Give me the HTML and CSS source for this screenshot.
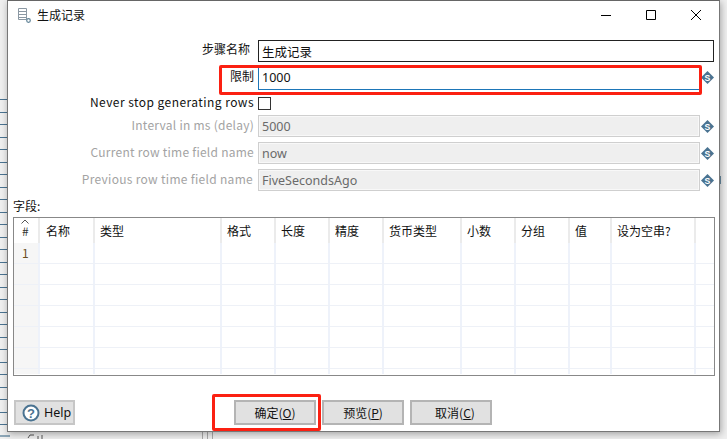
FILE: index.html
```html
<!DOCTYPE html>
<html lang="zh">
<head>
<meta charset="utf-8">
<title>生成记录</title>
<link rel="stylesheet" href="styles.css">
</head>
<body>
<div class="desktop">
  <div class="backdrop-lines"></div>
  <svg class="backdrop-bits" width="727" height="439" viewBox="0 0 727 439"><path d="M202.500 432v7M207.500 432v7M212.500 432v7" stroke="#a9a9a9"/><path d="M0 436h10" stroke="#6d8ea5" stroke-width="1.500"/><path d="M28 438l2-3h4M38 436v3M42 435v4" stroke="#555" fill="none"/><path d="M720.500 176v8" stroke="#6d8ea5"/></svg>
  <div class="window">
    <div class="titlebar">
      <svg class="app-icon" width="14" height="16" viewBox="0 0 14 16"><path d="M.5.5h8v11h-8zM.5 3.500h8M.5 6.500h8M.5 9.500h8" fill="none" stroke="#8b98a3"/><circle cx="10.500" cy="12.500" r="1.800" fill="none" stroke="#5f8296" stroke-width="1.200"/></svg>
      <span class="title">生成记录</span>
      <div class="controls">
        <svg width="12" height="12" viewBox="0 0 12 12"><path d="M1 6.500h10" stroke="#000"/></svg>
        <svg width="12" height="12" viewBox="0 0 12 12"><path d="M1.500 1.500h9v9h-9z" fill="none" stroke="#000"/></svg>
        <svg width="12" height="12" viewBox="0 0 12 12"><path d="M1 1l10 10M11 1L1 11" stroke="#000"/></svg>
      </div>
    </div>
    <div class="form">
      <div class="row r-name"><label>步骤名称</label><div class="input dark grow">生成记录</div></div>
      <div class="row r-limit"><label>限制</label><div class="input focus grow">1000</div><svg class="var" viewBox="0 0 12 12"><path d="M6 0l6 6-6 6-6-6z" fill="#4a7391"/><text x="6" y="9" text-anchor="middle" class="var-s">S</text></svg></div>
      <div class="row r-check"><label class="latin">Never stop generating rows</label><span class="check"></span></div>
      <div class="row r-dis"><label class="off">Interval in ms (delay)</label><div class="input dis grow">5000</div><svg class="var" viewBox="0 0 12 12"><path d="M6 0l6 6-6 6-6-6z" fill="#4a7391"/><text x="6" y="9" text-anchor="middle" class="var-s">S</text></svg></div>
      <div class="row r-dis"><label class="off">Current row time field name</label><div class="input dis grow">now</div><svg class="var" viewBox="0 0 12 12"><path d="M6 0l6 6-6 6-6-6z" fill="#4a7391"/><text x="6" y="9" text-anchor="middle" class="var-s">S</text></svg></div>
      <div class="row r-dis"><label class="off prev">Previous row time field name</label><div class="input dis grow">FiveSecondsAgo</div><svg class="var" viewBox="0 0 12 12"><path d="M6 0l6 6-6 6-6-6z" fill="#4a7391"/><text x="6" y="9" text-anchor="middle" class="var-s">S</text></svg></div>
    </div>
    <div class="fields-label">字段:</div>
    <div class="table">
      <div class="tr head">
        <div class="c c0"><svg class="caret" width="8" height="5" viewBox="0 0 8 5"><path d="M.5 4.500L4 1l3.500 3.500" fill="none" stroke="#555"/></svg>#</div><div class="c c1">名称</div><div class="c c2">类型</div><div class="c c3">格式</div><div class="c c4">长度</div><div class="c c5">精度</div><div class="c c6">货币类型</div><div class="c c7">小数</div><div class="c c8">分组</div><div class="c c9">值</div><div class="c c10">设为空串?</div><div class="c c11"></div>
      </div>
      <div class="tr"><div class="c c0">1</div><div class="c c1"></div><div class="c c2"></div><div class="c c3"></div><div class="c c4"></div><div class="c c5"></div><div class="c c6"></div><div class="c c7"></div><div class="c c8"></div><div class="c c9"></div><div class="c c10"></div><div class="c c11"></div></div>
      <div class="tr"><div class="c c0"></div><div class="c c1"></div><div class="c c2"></div><div class="c c3"></div><div class="c c4"></div><div class="c c5"></div><div class="c c6"></div><div class="c c7"></div><div class="c c8"></div><div class="c c9"></div><div class="c c10"></div><div class="c c11"></div></div>
      <div class="tr"><div class="c c0"></div><div class="c c1"></div><div class="c c2"></div><div class="c c3"></div><div class="c c4"></div><div class="c c5"></div><div class="c c6"></div><div class="c c7"></div><div class="c c8"></div><div class="c c9"></div><div class="c c10"></div><div class="c c11"></div></div>
      <div class="tr"><div class="c c0"></div><div class="c c1"></div><div class="c c2"></div><div class="c c3"></div><div class="c c4"></div><div class="c c5"></div><div class="c c6"></div><div class="c c7"></div><div class="c c8"></div><div class="c c9"></div><div class="c c10"></div><div class="c c11"></div></div>
      <div class="tr"><div class="c c0"></div><div class="c c1"></div><div class="c c2"></div><div class="c c3"></div><div class="c c4"></div><div class="c c5"></div><div class="c c6"></div><div class="c c7"></div><div class="c c8"></div><div class="c c9"></div><div class="c c10"></div><div class="c c11"></div></div>
      <div class="tr"><div class="c c0"></div><div class="c c1"></div><div class="c c2"></div><div class="c c3"></div><div class="c c4"></div><div class="c c5"></div><div class="c c6"></div><div class="c c7"></div><div class="c c8"></div><div class="c c9"></div><div class="c c10"></div><div class="c c11"></div></div>
      <div class="tr last"><div class="c c0"></div><div class="c c1"></div><div class="c c2"></div><div class="c c3"></div><div class="c c4"></div><div class="c c5"></div><div class="c c6"></div><div class="c c7"></div><div class="c c8"></div><div class="c c9"></div><div class="c c10"></div><div class="c c11"></div></div>
    </div>
    <div class="actions">
      <button class="btn help"><svg width="18" height="18" viewBox="0 0 18 18"><circle cx="9" cy="9" r="7.500" fill="#fff" stroke="#4a7391" stroke-width="2"/><text x="9" y="13.500" text-anchor="middle" class="q">?</text></svg>Help</button>
      <div class="main-actions">
        <button class="btn">确定(<u>O</u>)</button>
        <button class="btn">预览(<u>P</u>)</button>
        <button class="btn cancel">取消(<u>C</u>)</button>
      </div>
    </div>
    <div class="mark mark-limit"></div>
    <div class="mark mark-ok"></div>
  </div>
</div>
</body>
</html>
```
FILE: styles.css
```css
* { box-sizing: border-box; }
html, body { margin: 0; padding: 0; overflow: hidden; }
body { width: 727px; height: 439px; background: #efefef; font-family: "Noto Sans CJK SC", "Noto Sans", sans-serif; font-size: 12px; color: #111; }
.desktop { position: relative; width: 727px; height: 439px; }
.backdrop-lines { position: absolute; left: 0; top: 88px; width: 7px; height: 340px; background: repeating-linear-gradient(transparent 0 11px, #4a7391 11px 12px, transparent 12px 12.500px); }
.backdrop-bits { position: absolute; left: 0; top: 0; }
.window { position: absolute; left: 7px; top: 0; width: 713px; height: 432px; background: #fff; border: 1px solid #777; border-top-color: #666; box-shadow: 1px 2px 7px rgba(0,0,0,.32); display: flex; flex-direction: column; }
.titlebar { height: 28px; flex: none; display: flex; align-items: center; padding-left: 10px; }
.app-icon { flex: none; margin-top: 2px; }
.title { margin-left: 5px; margin-top: -2px; font-size: 12px; }
.controls { margin-left: auto; display: flex; gap: 33px; padding-right: 17px; }
.form { padding-top: 11px; padding-right: 5px; display: flex; flex-direction: column; }
.row { display: flex; align-items: center; }
.row label { width: 250px; flex: none; text-align: right; padding-right: 4px; font-size: 12px; line-height: 16px; white-space: nowrap; margin-top: -4px; }
.row .latin { letter-spacing: .45px; margin-top: -3px; }
.row label.off { color: #a3a3a3; letter-spacing: .25px; margin-top: -3px; }
.row label.prev { padding-right: 5px; letter-spacing: .3px; }
.r-name { height: 22px; margin-bottom: 3px; }
.r-name label { padding-right: 8px; }
.r-limit { height: 25px; }
.r-check { height: 18px; margin-top: 4px; margin-bottom: 3px; }
.r-dis { height: 22px; margin-bottom: 5px; }
.input { height: 100%; display: flex; align-items: center; padding-left: 3px; font-size: 12.500px; font-family: "Noto Sans", "Noto Sans CJK SC", sans-serif; }
.grow { flex: 1; }
.dark { border: 1px solid #222; }
.focus { border-bottom: 1px solid #1d76b8; border-left: 1px solid #1d76b8; height: 24px; padding-top: 1px; }
.dis { border: 1px solid #cfcfcf; background: #efefef; box-shadow: inset 0 0 0 1px #f8f8f8; color: #6a6a6a; }
.r-limit .grow, .r-dis .grow { flex: none; width: 442px; }
.var { width: 13px; height: 13px; margin-left: 1px; flex: none; }
.var-s { font: bold 8px "Liberation Sans", sans-serif; fill: #fff; }
.check { display: block; width: 13px; height: 13px; border: 1px solid #333; }
.fields-label { margin-left: 5px; margin-top: 2px; height: 19px; line-height: 16px; font-size: 12px; }
.table { margin-left: 5px; width: 702px; height: 159px; border: 1px solid #888; overflow: hidden; flex: none; }
.tr { display: flex; height: 21px; border-bottom: 1px solid #eef1f7; }
.tr.head { height: 25px; border-bottom: 0; }
.tr.last { height: 5px; border-bottom: 0; }
.c { flex: none; border-right: 2px solid #eef2fa; padding-left: 5px; font-size: 12px; line-height: 26px; position: relative; white-space: nowrap; }
.head .c { border-right-color: #ebebeb; }
.c1 { padding-left: 6px; }
.c0 { width: 26px; background: #f6f6f6; color: #6b4f1f; padding-left: 8px; font-size: 12px; }
.head .c0 { background: #fff; color: #333; line-height: 26px; }
.caret { position: absolute; left: 7px; top: 1px; display: block; }
.c1 { width: 55px; } .c2 { width: 127px; } .c3 { width: 54px; } .c4 { width: 54px; } .c5 { width: 54px; }
.c6 { width: 78px; } .c7 { width: 54px; } .c8 { width: 54px; } .c9 { width: 42px; } .c10 { width: 84px; }
.c11 { width: 18px; border-right: 0; }
.tr:not(.head) .c { line-height: 20px; }
.actions { display: flex; margin-top: 24px; padding-left: 6px; }
.main-actions { display: flex; gap: 6px; margin-left: 159px; }
.btn { width: 82px; height: 25px; background: #e1e1e1; border: 2px solid #b4b4b4; padding: 0; font: 12px "Noto Sans CJK SC", "Noto Sans", sans-serif; color: #111; }
.btn.cancel { padding-left: 8px; }
.btn.help { width: 61px; display: flex; align-items: center; gap: 4px; padding-left: 6px; border-color: #c6c6c6; font-family: "Noto Sans", sans-serif; font-size: 12.500px; }
.q { font: bold 13px "Liberation Sans", sans-serif; fill: #4a7391; }
.mark { position: absolute; border: 3px solid #fb2012; border-radius: 2px; pointer-events: none; }
.mark-limit { left: 211px; top: 64px; width: 483px; height: 30px; }
.mark-ok { left: 204px; top: 393px; width: 109px; height: 37px; }
```
